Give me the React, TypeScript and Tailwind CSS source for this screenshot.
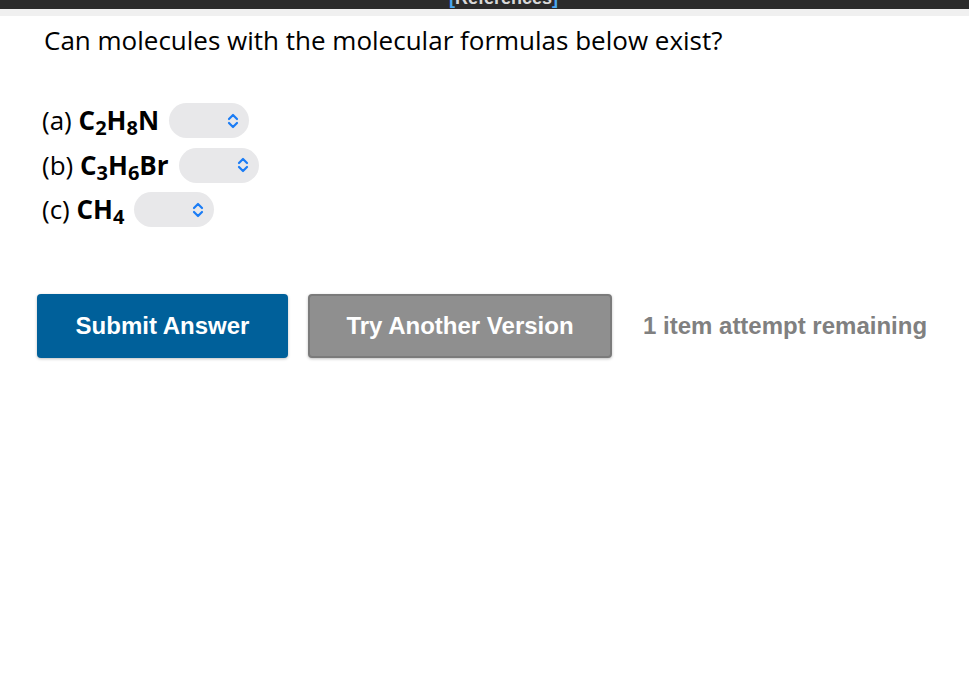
import React from "react";

function UpDown() {
  return (
    <svg width="12" height="16" viewBox="0 0 12 16" fill="none" stroke="#1a7cf5" strokeWidth="2.2" strokeLinecap="round" strokeLinejoin="round">
      <path d="M2 6 L6 2 L10 6" />
      <path d="M2 10 L6 14 L10 10" />
    </svg>
  );
}

function Pill() {
  return (
    <div className="ml-[10px] w-[80px] h-[35px] rounded-full bg-[#e8e8ea] flex items-center justify-end pr-[10px]">
      <UpDown />
    </div>
  );
}

function Sub({ children }: { children: React.ReactNode }) {
  return <span className="text-[20px] relative top-[5px]">{children}</span>;
}

export default function App() {
  const os = { fontFamily: '"Open Sans", sans-serif' };
  return (
    <div className="w-[969px] h-[697px] bg-white overflow-hidden relative">
      <div className="h-[9px] bg-[#2b2b2b] relative overflow-hidden">
        <div className="absolute left-[449px] top-[-15px] text-[18px] font-bold text-[#d8d8d8]" style={{ fontFamily: '"Liberation Sans", sans-serif' }}>
          <span className="text-[#4aa8f0]">[</span>References<span className="text-[#4aa8f0]">]</span>
        </div>
      </div>
      <div className="h-[7px] bg-[#f0f0f0]" />
      <div className="pl-[44px] pt-[6px] text-[26px] text-black leading-[36px]" style={os}>
        Can molecules with the molecular formulas below exist?
      </div>
      <div className="pl-[42px] pt-[45px] flex flex-col gap-[9.5px] text-[26px] text-black" style={os}>
        <div className="flex items-center h-[35px]">
          <span>(a)&nbsp;</span>
          <span className="font-bold">C<Sub>2</Sub>H<Sub>8</Sub>N</span>
          <Pill />
        </div>
        <div className="flex items-center h-[35px]">
          <span>(b)&nbsp;</span>
          <span className="font-bold">C<Sub>3</Sub>H<Sub>6</Sub>Br</span>
          <Pill />
        </div>
        <div className="flex items-center h-[35px]">
          <span>(c)&nbsp;</span>
          <span className="font-bold">CH<Sub>4</Sub></span>
          <Pill />
        </div>
      </div>
      <div className="pl-[37px] pt-[67px] flex items-center" style={{ fontFamily: '"Liberation Sans", Arial, sans-serif' }}>
        <div className="w-[251px] h-[64px] rounded-[4px] bg-[#00609a] text-white font-bold text-[24px] flex items-center justify-center shadow-[0_1px_3px_rgba(0,0,0,0.25)]">
          Submit Answer
        </div>
        <div className="ml-[20px] w-[304px] h-[64px] rounded-[4px] bg-[#8f8f8f] border-2 border-[#7b7b7b] text-white font-bold text-[24px] flex items-center justify-center shadow-[0_1px_3px_rgba(0,0,0,0.25)]">
          Try Another Version
        </div>
        <div className="ml-[31px] text-[#808080] font-bold text-[24px]">1 item attempt remaining</div>
      </div>
    </div>
  );
}
